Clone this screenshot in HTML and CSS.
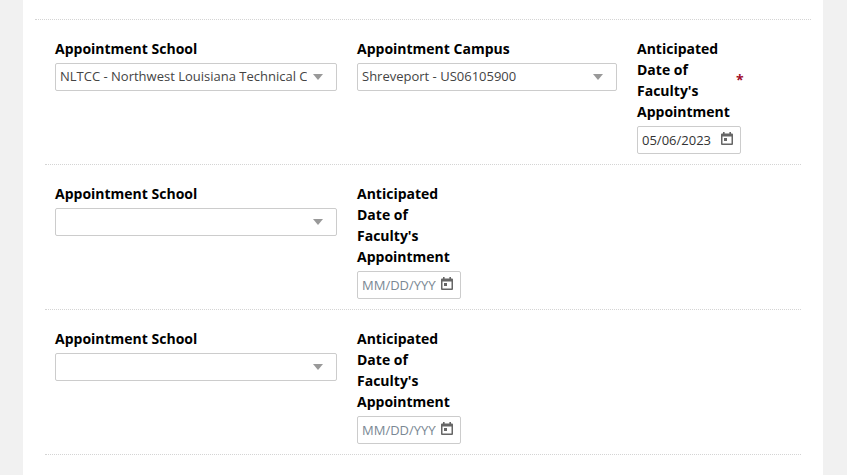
FILE: index.html
```html
<!DOCTYPE html>
<html lang="en">
<head>
<meta charset="utf-8">
<title>Appointment</title>
<link rel="stylesheet" href="styles.css">
</head>
<body>
<main class="page">
  <section class="group">
    <div class="row">
      <div class="field field-school">
        <label class="label">Appointment School</label>
        <div class="select"><span class="select-text">NLTCC - Northwest Louisiana Technical College</span><span class="caret"></span></div>
      </div>
      <div class="field field-campus">
        <label class="label">Appointment Campus</label>
        <div class="select"><span class="select-text">Shreveport - US06105900</span><span class="caret"></span></div>
      </div>
      <div class="field field-date">
        <div class="label-wrap"><label class="label label-narrow">Anticipated Date of Faculty's Appointment</label><span class="required">*</span></div>
        <div class="date"><input class="date-input" type="text" value="05/06/2023"><svg class="cal" viewBox="0 0 14 14"><path d="M3 0.5h1.6v1.5h4.8V0.5H11V2h1a1 1 0 0 1 1 1v9.5a1 1 0 0 1-1 1H2a1 1 0 0 1-1-1V3a1 1 0 0 1 1-1h1zM2.5 5v7h9V5z" fill="#666" fill-rule="evenodd"/><rect x="4" y="6.5" width="3" height="3" fill="#666"/></svg></div>
      </div>
    </div>
    <div class="row">
      <div class="field field-school">
        <label class="label">Appointment School</label>
        <div class="select"><span class="select-text"></span><span class="caret"></span></div>
      </div>
      <div class="field field-date">
        <div class="label-wrap"><label class="label label-narrow">Anticipated Date of Faculty's Appointment</label></div>
        <div class="date"><input class="date-input" type="text" placeholder="MM/DD/YYYY"><svg class="cal" viewBox="0 0 14 14"><path d="M3 0.5h1.6v1.5h4.8V0.5H11V2h1a1 1 0 0 1 1 1v9.5a1 1 0 0 1-1 1H2a1 1 0 0 1-1-1V3a1 1 0 0 1 1-1h1zM2.5 5v7h9V5z" fill="#666" fill-rule="evenodd"/><rect x="4" y="6.5" width="3" height="3" fill="#666"/></svg></div>
      </div>
    </div>
    <div class="row">
      <div class="field field-school">
        <label class="label">Appointment School</label>
        <div class="select"><span class="select-text"></span><span class="caret"></span></div>
      </div>
      <div class="field field-date">
        <div class="label-wrap"><label class="label label-narrow">Anticipated Date of Faculty's Appointment</label></div>
        <div class="date"><input class="date-input" type="text" placeholder="MM/DD/YYYY"><svg class="cal" viewBox="0 0 14 14"><path d="M3 0.5h1.6v1.5h4.8V0.5H11V2h1a1 1 0 0 1 1 1v9.5a1 1 0 0 1-1 1H2a1 1 0 0 1-1-1V3a1 1 0 0 1 1-1h1zM2.5 5v7h9V5z" fill="#666" fill-rule="evenodd"/><rect x="4" y="6.5" width="3" height="3" fill="#666"/></svg></div>
      </div>
    </div>
  </section>
</main>
</body>
</html>
```
FILE: styles.css
```css
* { box-sizing: border-box; }
html, body { height: 100%; }
body {
  margin: 0;
  background: #f1f1f1;
  font-family: "Open Sans", sans-serif;
  font-size: 14px;
  color: #000;
  overflow: hidden;
}
.page {
  width: 800px;
  height: 100%;
  margin-left: 23px;
  background: #fff;
  padding: 19px 12px 0;
}
.group {
  border-top: 1px dotted #d4d4d4;
  padding: 0 10px;
}
.row {
  display: flex;
  align-items: flex-start;
  gap: 20px;
  padding: 18px 10px 10px;
  border-bottom: 1px dotted #d4d4d4;
}
.field { display: flex; flex-direction: column; }
.field-school { width: 282px; }
.field-campus { width: 260px; }
.label {
  display: block;
  font-weight: 700;
  line-height: 21px;
  color: #000;
}
.label-wrap { display: flex; align-items: center; }
.label-narrow { width: 99px; }
.required {
  color: #a00d2b;
  font-weight: 700;
  line-height: 14px;
}
.select {
  display: flex;
  align-items: center;
  height: 28px;
  margin-top: 4px;
  border: 1px solid #ccc;
  border-radius: 2px;
  background: #fff;
  padding-left: 4px;
  position: relative;
}
.select-text {
  display: block;
  white-space: nowrap;
  overflow: hidden;
  font-size: 13px;
  color: #444;
  line-height: 24px;
  height: 24px;
  margin-top: -2px;
  flex: 1;
  min-width: 0;
  margin-right: 29px;
}
.caret {
  position: absolute;
  right: 13.5px;
  top: 9.5px;
  width: 0;
  height: 0;
  border-left: 5.5px solid transparent;
  border-right: 5.5px solid transparent;
  border-top: 6px solid #999;
}
.date {
  display: flex;
  align-items: center;
  width: 104px;
  height: 28px;
  margin-top: 4px;
  border: 1px solid #ccc;
  border-radius: 2px;
  padding-left: 4px;
  position: relative;
}
.date-input {
  width: 74px;
  height: 24px;
  border: 0;
  padding: 0;
  outline: 0;
  background: transparent;
  font-family: "Open Sans", sans-serif;
  font-size: 13px;
  color: #333;
}
.date-input::placeholder { color: #7a8894; opacity: 1; }
.cal {
  position: absolute;
  right: 6px;
  top: 4px;
  width: 14px;
  height: 15px;
}
```
